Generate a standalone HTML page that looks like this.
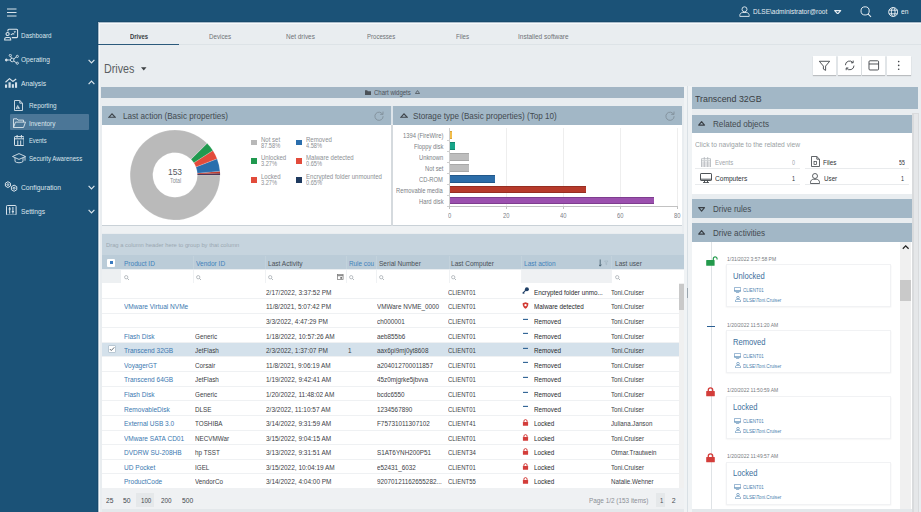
<!DOCTYPE html>
<html><head><meta charset="utf-8">
<style>
*{box-sizing:border-box;margin:0;padding:0}
html,body{width:921px;height:512px;overflow:hidden}
body{background:#1b5277;font-family:"Liberation Sans",sans-serif;position:relative;color:#333}
.a{position:absolute;white-space:nowrap}
</style></head>
<body>
<div class="a" style="left:97.00px;top:21.00px;width:824.00px;height:1.00px;background:#184a6c"></div>
<div class="a" style="left:97.00px;top:21.00px;width:1.00px;height:491.00px;background:#184a6c"></div>
<svg class="a" style="left:7.00px;top:8.00px" width="10" height="9" viewBox="0 0 10 9"><path d="M0 1h9.5M0 4.5h9.5M0 8h9.5" stroke="#dbe5ec" stroke-width="1" fill="none"/></svg>
<svg class="a" style="left:739.00px;top:6.00px" width="11" height="11" viewBox="0 0 11 11"><circle cx="5.5" cy="3.3" r="2.5" fill="none" stroke="#e6edf2" stroke-width="0.9"/><path d="M0.8 10.4v-1c0-1.6 1.3-2.9 2.9-2.9h3.6c1.6 0 2.9 1.3 2.9 2.9v1z" fill="none" stroke="#e6edf2" stroke-width="0.9"/></svg>
<div class="a" style="left:752.90px;top:7px;font-size:7px;line-height:10px;color:#e6edf2;transform:scaleX(0.929);transform-origin:0 0">DLSE\administrator@root</div>
<svg class="a" style="left:834.20px;top:9.60px" width="7.4" height="4.6" viewBox="0 0 7.4 4.6"><path d="M0.7 0.7h6L3.7 3.9z" fill="none" stroke="#e6edf2" stroke-width="1.2" stroke-linejoin="round"/></svg>
<svg class="a" style="left:860.00px;top:5.50px" width="12" height="12" viewBox="0 0 12 12"><circle cx="5.1" cy="4.9" r="4.1" fill="none" stroke="#e6edf2" stroke-width="1"/><path d="M8 7.9l3 3" stroke="#e6edf2" stroke-width="1.1"/></svg>
<svg class="a" style="left:887.60px;top:7.00px" width="10.4" height="10" viewBox="0 0 10.4 10"><g fill="none" stroke="#e6edf2" stroke-width="0.95"><circle cx="5.2" cy="5" r="4.5"/><ellipse cx="5.2" cy="5" rx="1.9" ry="4.5"/><path d="M0.9 3.2h8.6M0.9 6.8h8.6"/></g></svg>
<div class="a" style="left:900.50px;top:7px;font-size:7px;line-height:10px;color:#e6edf2;transform:scaleX(0.963);transform-origin:0 0">en</div>
<svg class="a" style="left:4.00px;top:28.00px" width="15" height="13" viewBox="0 0 15 13"><g fill="none" stroke="#dbe5ec" stroke-width="1.05"><path d="M3.9 3.4V2.3a1 1 0 0 1 1-1H12.6a1 1 0 0 1 1 1V8.6a1 1 0 0 1-1 1H7.8"/><circle cx="3.6" cy="6" r="1.55"/><path d="M0.7 11.9v-0.7a1.8 1.8 0 0 1 1.8-1.8h2.4a1.8 1.8 0 0 1 1.8 1.8v0.7z"/><path d="M6.8 6.9L9 5.6l1.3 0.6"/></g><path d="M9.6 3.4l2.2-0.3-0.8 2.2z" fill="#dbe5ec"/></svg>
<div class="a" style="left:20.70px;top:31px;font-size:7px;line-height:10px;color:#dbe5ec;transform:scaleX(0.891);transform-origin:0 0">Dashboard</div>
<svg class="a" style="left:4.50px;top:53.50px" width="14" height="11" viewBox="0 0 14 11"><g fill="none" stroke="#dbe5ec" stroke-width="0.9"><circle cx="1.3" cy="6" r="1" fill="#dbe5ec"/><circle cx="7.2" cy="6" r="1.8"/><circle cx="5.3" cy="1.4" r="1.1"/><circle cx="12.3" cy="2.4" r="1.1"/><circle cx="12.3" cy="9.2" r="1.1"/><path d="M2.3 6H5.4M6.5 4.3L5.8 2.4M8.7 5l2.6-2M8.7 7.1l2.6 1.6"/></g></svg>
<div class="a" style="left:21.10px;top:55px;font-size:7px;line-height:10px;color:#dbe5ec;transform:scaleX(0.940);transform-origin:0 0">Operating</div>
<svg class="a" style="left:88.00px;top:58.50px" width="7" height="5" viewBox="0 0 7 5"><g fill="none" stroke="#dbe5ec" stroke-width="1.2"><path d="M0.6 0.8L3.5 3.8L6.4 0.8"/></g></svg>
<svg class="a" style="left:3.00px;top:76.00px" width="16" height="13" viewBox="0 0 16 13"><g fill="#d3e0ea"><rect x="2" y="8.5" width="2.1" height="3.3"/><rect x="5.5" y="6.3" width="2.2" height="5.5"/><rect x="8.8" y="8.2" width="2.1" height="3.6"/><rect x="12" y="6.3" width="2.1" height="5.5"/></g><path d="M2.5 6.2L6.5 2.6L9.8 5.4L13.2 3" fill="none" stroke="#dbe5ec" stroke-width="1.2" stroke-linejoin="round"/></svg>
<div class="a" style="left:21.00px;top:79px;font-size:7px;line-height:10px;color:#dbe5ec;transform:scaleX(0.959);transform-origin:0 0">Analysis</div>
<svg class="a" style="left:88.00px;top:79.50px" width="7" height="5" viewBox="0 0 7 5"><g fill="none" stroke="#dbe5ec" stroke-width="1.2"><path d="M0.6 4.2L3.5 1.2L6.4 4.2"/></g></svg>
<svg class="a" style="left:14.00px;top:99.50px" width="9" height="11" viewBox="0 0 9 11"><g fill="none" stroke="#dbe5ec" stroke-width="0.9"><path d="M0.5 0.5h5.3l2.7 2.7v7.3H0.5z"/><path d="M5.8 0.5v2.7h2.7M2.2 9l1.5-3.5 1.5 3.5M2.7 8h3"/></g></svg>
<div class="a" style="left:29.00px;top:101px;font-size:7px;line-height:10px;color:#dbe5ec;transform:scaleX(0.909);transform-origin:0 0">Reporting</div>
<div class="a" style="left:9.70px;top:114.40px;width:79.10px;height:16.10px;background:#4b7697;border-radius:1px"></div>
<svg class="a" style="left:12.70px;top:118.00px" width="13" height="10" viewBox="0 0 13 10"><g fill="none" stroke="#dbe5ec" stroke-width="0.9"><path d="M0.5 9.5V0.8h3.5l1 1.3h5.5v2"/><path d="M0.5 9.5l2-5.4h10l-2 5.4z"/></g></svg>
<div class="a" style="left:29.00px;top:119px;font-size:7px;line-height:10px;color:#dbe5ec;transform:scaleX(0.917);transform-origin:0 0">Inventory</div>
<svg class="a" style="left:13.70px;top:135.00px" width="10.5" height="11" viewBox="0 0 10.5 11"><g fill="none" stroke="#dbe5ec" stroke-width="1"><rect x="0.5" y="1.6" width="9.5" height="8.9" rx="0.6"/><path d="M0.5 3.8h9.5M3.1 0v2.8M7.4 0v2.8M3.8 5.5v5M6.7 5.5v5"/></g></svg>
<div class="a" style="left:29.00px;top:136px;font-size:7px;line-height:10px;color:#dbe5ec;transform:scaleX(0.822);transform-origin:0 0">Events</div>
<svg class="a" style="left:12.00px;top:153.00px" width="14" height="11" viewBox="0 0 14 11"><g fill="none" stroke="#dbe5ec" stroke-width="0.9"><path d="M0.5 3.5L7 0.6l6.5 2.9L7 6.4z"/><path d="M3 4.7v3.8c1.5 1.7 6.5 1.7 8 0V4.7M13 3.7v4"/></g></svg>
<div class="a" style="left:29.00px;top:154px;font-size:7px;line-height:10px;color:#dbe5ec;transform:scaleX(0.867);transform-origin:0 0">Security Awareness</div>
<svg class="a" style="left:3.00px;top:180.00px" width="16" height="13" viewBox="0 0 16 13"><g fill="none" stroke="#dbe5ec" stroke-width="1"><path d="M7.41 6.05L4.90 7.50L2.39 6.05L2.39 3.15L4.90 1.70L7.41 3.15z"/><circle cx="4.9" cy="4.6" r="0.9"/><path d="M13.78 9.75L11.10 11.30L8.42 9.75L8.42 6.65L11.10 5.10L13.78 6.65z"/><circle cx="11.1" cy="8.2" r="1"/></g></svg>
<div class="a" style="left:21.10px;top:183px;font-size:7px;line-height:10px;color:#dbe5ec;transform:scaleX(0.963);transform-origin:0 0">Configuration</div>
<svg class="a" style="left:88.00px;top:185.00px" width="7" height="5" viewBox="0 0 7 5"><g fill="none" stroke="#dbe5ec" stroke-width="1.2"><path d="M0.6 0.8L3.5 3.8L6.4 0.8"/></g></svg>
<svg class="a" style="left:6.00px;top:204.60px" width="10.6" height="10.6" viewBox="0 0 10.6 10.6"><g fill="none" stroke="#dbe5ec" stroke-width="1"><rect x="0.5" y="0.5" width="9.6" height="9.6" rx="0.8"/><path d="M3.7 2v6.6M6.9 2v6.6M2.6 4h2.2M5.8 6.6h2.2"/></g></svg>
<div class="a" style="left:21.10px;top:207px;font-size:7px;line-height:10px;color:#dbe5ec;transform:scaleX(0.949);transform-origin:0 0">Settings</div>
<svg class="a" style="left:88.00px;top:209.00px" width="7" height="5" viewBox="0 0 7 5"><g fill="none" stroke="#dbe5ec" stroke-width="1.2"><path d="M0.6 0.8L3.5 3.8L6.4 0.8"/></g></svg>
<div class="a" style="left:98.00px;top:22.00px;width:823.00px;height:490.00px;background:#e9edf0"></div>
<div class="a" style="left:98.00px;top:22.00px;width:823.00px;height:1.00px;background:#a9bccb"></div>
<div class="a" style="left:98.00px;top:23.00px;width:823.00px;height:1.00px;background:#f7f9fa"></div>
<div class="a" style="left:98.00px;top:22.00px;width:1.00px;height:490.00px;background:#a9bccb"></div>
<div class="a" style="left:99.00px;top:23.00px;width:1.00px;height:489.00px;background:#f7f9fa"></div>
<div class="a" style="left:98.00px;top:44.00px;width:823.00px;height:1.00px;background:#dde3e7"></div>
<div class="a" style="left:98.00px;top:44.00px;width:81.00px;height:1.30px;background:#2b5a7c"></div>
<div class="a" style="left:129.80px;top:32px;font-size:7px;line-height:10px;color:#3a3e42;font-weight:bold;transform:scaleX(0.841);transform-origin:0 0">Drives</div>
<div class="a" style="left:208.60px;top:32px;font-size:7px;line-height:10px;color:#6e7276;transform:scaleX(0.888);transform-origin:0 0">Devices</div>
<div class="a" style="left:286.10px;top:32px;font-size:7px;line-height:10px;color:#6e7276;transform:scaleX(0.917);transform-origin:0 0">Net drives</div>
<div class="a" style="left:367.20px;top:32px;font-size:7px;line-height:10px;color:#6e7276;transform:scaleX(0.863);transform-origin:0 0">Processes</div>
<div class="a" style="left:455.60px;top:32px;font-size:7px;line-height:10px;color:#6e7276;transform:scaleX(0.886);transform-origin:0 0">Files</div>
<div class="a" style="left:517.70px;top:32px;font-size:7px;line-height:10px;color:#6e7276;transform:scaleX(0.929);transform-origin:0 0">Installed software</div>
<div class="a" style="left:103.80px;top:61px;font-size:12.5px;line-height:16px;color:#5a5e62;transform:scaleX(0.858);transform-origin:0 0">Drives</div>
<svg class="a" style="left:141.30px;top:67.00px" width="5.5" height="4" viewBox="0 0 5.5 4"><path d="M0 0.3h5.5L2.75 3.5z" fill="#3d4144"/></svg>
<div class="a" style="left:812.7px;top:56.2px;width:23.4px;height:18.7px;background:#fff;box-shadow:0 1px 1px rgba(0,0,0,0.2)"></div>
<svg class="a" style="left:812.70px;top:56.20px" width="23.4" height="18.7" viewBox="0 0 23.4 18.7"><path d="M6.3 5.3h10.4l-4.1 4.8v4.3l-2.2-1.3v-3z" fill="none" stroke="#3f4347" stroke-width="0.9"/></svg>
<div class="a" style="left:837.7px;top:56.2px;width:23.4px;height:18.7px;background:#fff;box-shadow:0 1px 1px rgba(0,0,0,0.2)"></div>
<svg class="a" style="left:837.70px;top:56.20px" width="23.4" height="18.7" viewBox="0 0 23.4 18.7"><g fill="none" stroke="#3f4347" stroke-width="0.9"><path d="M7.4 9.2a4.2 4.2 0 0 1 7.5-2.6M16 9.6a4.2 4.2 0 0 1-7.5 2.6"/><path d="M15.2 4.6v2.2H13M8.2 14.2V12h2.2"/></g></svg>
<div class="a" style="left:862px;top:56.2px;width:23.4px;height:18.7px;background:#fff;box-shadow:0 1px 1px rgba(0,0,0,0.2)"></div>
<svg class="a" style="left:862.00px;top:56.20px" width="23.4" height="18.7" viewBox="0 0 23.4 18.7"><rect x="7" y="4.8" width="9.6" height="9.2" rx="1" fill="none" stroke="#3f4347" stroke-width="0.9"/><path d="M7 8h9.6" stroke="#3f4347" stroke-width="0.9"/></svg>
<div class="a" style="left:887.4px;top:56.2px;width:23.4px;height:18.7px;background:#fff;box-shadow:0 1px 1px rgba(0,0,0,0.2)"></div>
<svg class="a" style="left:887.40px;top:56.20px" width="23.4" height="18.7" viewBox="0 0 23.4 18.7"><circle cx="11.7" cy="5.6" r="0.8" fill="#3f4347"/><circle cx="11.7" cy="9.4" r="0.8" fill="#3f4347"/><circle cx="11.7" cy="13.2" r="0.8" fill="#3f4347"/></svg>
<div class="a" style="left:101.20px;top:87.00px;width:582.80px;height:11.20px;background:#a2b5c4"></div>
<svg class="a" style="left:364.50px;top:90.00px" width="6" height="5" viewBox="0 0 6 5"><path d="M0 0.3h2.2l0.6 0.9H6V5H0z" fill="#4b5258"/></svg>
<div class="a" style="left:374.00px;top:89px;font-size:6.5px;line-height:8px;color:#4b5258;transform:scaleX(0.926);transform-origin:0 0">Chart widgets</div>
<svg class="a" style="left:415.30px;top:90.30px" width="5" height="4" viewBox="0 0 5 4"><path d="M0.4 3.5L2.5 0.6L4.6 3.5z" fill="none" stroke="#4b5258" stroke-width="0.8"/></svg>
<div class="a" style="left:101.80px;top:106.30px;width:289.40px;height:119.20px;background:#fff"></div>
<div class="a" style="left:101.80px;top:225.00px;width:289.40px;height:1.20px;background:#c9d1d7"></div>
<div class="a" style="left:101.80px;top:106.30px;width:289.40px;height:18.70px;background:#a2b7c6"></div>
<svg class="a" style="left:108.20px;top:112.60px" width="8" height="5" viewBox="0 0 8 5"><path d="M0.8 4.3L4 0.8L7.2 4.3z" fill="none" stroke="#3f464c" stroke-width="1.1"/></svg>
<div class="a" style="left:122.50px;top:110px;font-size:9.5px;line-height:12px;color:#434a50;transform:scaleX(0.853);transform-origin:0 0">Last action (Basic properties)</div>
<svg class="a" style="left:373.60px;top:111.00px" width="10" height="10" viewBox="0 0 10 10"><path d="M8.6 3.3A4.1 4.1 0 1 0 9.1 5.2" fill="none" stroke="#7e8c96" stroke-width="0.8"/><path d="M9 0.6v2.8H6.2" fill="none" stroke="#7e8c96" stroke-width="0.8"/></svg>
<svg class="a" style="left:125px;top:125px" width="100" height="100" viewBox="125 125 100 100"><path d="M220.10 175.00A45 45 0 0 0 220.06 173.16L197.38 174.09A22.3 22.3 0 0 1 197.40 175.00z" fill="#3a2448"/><path d="M220.06 173.16A45 45 0 0 0 219.95 171.33L197.33 173.18A22.3 22.3 0 0 1 197.38 174.09z" fill="#c0392b"/><path d="M219.95 171.33A45 45 0 0 0 217.06 158.75L195.90 166.95A22.3 22.3 0 0 1 197.33 173.18z" fill="#2a6ead" stroke="#fff" stroke-width="0.3" stroke-opacity="0.6"/><path d="M217.06 158.75A45 45 0 0 0 212.87 150.53L193.82 162.87A22.3 22.3 0 0 1 195.90 166.95z" fill="#e24b3b" stroke="#fff" stroke-width="0.3" stroke-opacity="0.6"/><path d="M212.87 150.53A45 45 0 0 0 207.08 143.34L190.95 159.31A22.3 22.3 0 0 1 193.82 162.87z" fill="#20994f" stroke="#fff" stroke-width="0.3" stroke-opacity="0.6"/><path d="M207.08 143.34A45 45 0 1 0 220.10 175.01L197.40 175.00A22.3 22.3 0 1 1 190.95 159.31z" fill="#bababa" stroke="#fff" stroke-width="0.3" stroke-opacity="0.6"/></svg>
<div class="a" style="left:168.20px;top:166px;font-size:9px;line-height:12px;color:#55595e;transform:scaleX(0.926);transform-origin:0 0">153</div>
<div class="a" style="left:169.60px;top:177px;font-size:6.5px;line-height:8px;color:#8a8e92;transform:scaleX(0.816);transform-origin:0 0">Total</div>
<div class="a" style="left:251.00px;top:139.60px;width:6.20px;height:5.90px;background:#b8b8b8"></div>
<div class="a" style="left:261.00px;top:136px;font-size:6.5px;line-height:8px;color:#8c9094;transform:scaleX(0.930);transform-origin:0 0">Not set</div>
<div class="a" style="left:261.00px;top:142px;font-size:6.5px;line-height:8px;color:#8c9094;transform:scaleX(0.870);transform-origin:0 0">87.58%</div>
<div class="a" style="left:251.00px;top:158.40px;width:6.20px;height:5.90px;background:#20994f"></div>
<div class="a" style="left:261.00px;top:154px;font-size:6.5px;line-height:8px;color:#8c9094;transform:scaleX(0.930);transform-origin:0 0">Unlocked</div>
<div class="a" style="left:261.00px;top:160px;font-size:6.5px;line-height:8px;color:#8c9094;transform:scaleX(0.870);transform-origin:0 0">3.27%</div>
<div class="a" style="left:251.00px;top:177.10px;width:6.20px;height:5.90px;background:#e24b3b"></div>
<div class="a" style="left:261.00px;top:173px;font-size:6.5px;line-height:8px;color:#8c9094;transform:scaleX(0.930);transform-origin:0 0">Locked</div>
<div class="a" style="left:261.00px;top:179px;font-size:6.5px;line-height:8px;color:#8c9094;transform:scaleX(0.870);transform-origin:0 0">3.27%</div>
<div class="a" style="left:296.20px;top:139.60px;width:6.20px;height:5.90px;background:#2a6ead"></div>
<div class="a" style="left:306.20px;top:136px;font-size:6.5px;line-height:8px;color:#8c9094;transform:scaleX(0.930);transform-origin:0 0">Removed</div>
<div class="a" style="left:306.20px;top:142px;font-size:6.5px;line-height:8px;color:#8c9094;transform:scaleX(0.870);transform-origin:0 0">4.58%</div>
<div class="a" style="left:296.20px;top:158.40px;width:6.20px;height:5.90px;background:#e24b3b"></div>
<div class="a" style="left:306.20px;top:154px;font-size:6.5px;line-height:8px;color:#8c9094;transform:scaleX(0.930);transform-origin:0 0">Malware detected</div>
<div class="a" style="left:306.20px;top:160px;font-size:6.5px;line-height:8px;color:#8c9094;transform:scaleX(0.870);transform-origin:0 0">0.65%</div>
<div class="a" style="left:296.20px;top:177.10px;width:6.20px;height:5.90px;background:#1f3a5f"></div>
<div class="a" style="left:306.20px;top:173px;font-size:6.5px;line-height:8px;color:#8c9094;transform:scaleX(0.930);transform-origin:0 0">Encrypted folder unmounted</div>
<div class="a" style="left:306.20px;top:179px;font-size:6.5px;line-height:8px;color:#8c9094;transform:scaleX(0.870);transform-origin:0 0">0.65%</div>
<div class="a" style="left:392.80px;top:106.30px;width:289.40px;height:119.20px;background:#fff"></div>
<div class="a" style="left:392.80px;top:225.00px;width:289.40px;height:1.20px;background:#c9d1d7"></div>
<div class="a" style="left:392.80px;top:106.30px;width:289.40px;height:18.70px;background:#a2b7c6"></div>
<svg class="a" style="left:399.70px;top:112.60px" width="8" height="5" viewBox="0 0 8 5"><path d="M0.8 4.3L4 0.8L7.2 4.3z" fill="none" stroke="#3f464c" stroke-width="1.1"/></svg>
<div class="a" style="left:413.40px;top:110px;font-size:9.5px;line-height:12px;color:#434a50;transform:scaleX(0.853);transform-origin:0 0">Storage type (Basic properties) (Top 10)</div>
<svg class="a" style="left:665.00px;top:111.00px" width="10" height="10" viewBox="0 0 10 10"><path d="M8.6 3.3A4.1 4.1 0 1 0 9.1 5.2" fill="none" stroke="#7e8c96" stroke-width="0.8"/><path d="M9 0.6v2.8H6.2" fill="none" stroke="#7e8c96" stroke-width="0.8"/></svg>
<div class="a" style="left:506.20px;top:128.00px;width:0.70px;height:78.00px;background:#eeeeee"></div>
<div class="a" style="left:563.20px;top:128.00px;width:0.70px;height:78.00px;background:#eeeeee"></div>
<div class="a" style="left:620.20px;top:128.00px;width:0.70px;height:78.00px;background:#eeeeee"></div>
<div class="a" style="left:677.20px;top:128.00px;width:0.70px;height:78.00px;background:#eeeeee"></div>
<div class="a" style="left:449.20px;top:131.40px;width:2.85px;height:7.20px;background:#f2bd4a;border-top:0.6px solid #d9a43a;border-bottom:0.6px solid #d9a43a"></div>
<div class="a" style="left:402.74px;top:131px;font-size:7px;line-height:10px;color:#7b8085;transform:scaleX(0.830);transform-origin:0 0">1394 (FireWire)</div>
<div class="a" style="left:447.00px;top:140.40px;width:2.20px;height:0.70px;background:#cfcfcf"></div>
<div class="a" style="left:449.20px;top:142.38px;width:5.70px;height:7.20px;background:#17a589;border-top:0.6px solid #11876f;border-bottom:0.6px solid #11876f"></div>
<div class="a" style="left:413.72px;top:142px;font-size:7px;line-height:10px;color:#7b8085;transform:scaleX(0.830);transform-origin:0 0">Floppy disk</div>
<div class="a" style="left:447.00px;top:151.38px;width:2.20px;height:0.70px;background:#cfcfcf"></div>
<div class="a" style="left:449.20px;top:153.36px;width:19.95px;height:7.20px;background:#bdbdbd;border-top:0.6px solid #a8a8a8;border-bottom:0.6px solid #a8a8a8"></div>
<div class="a" style="left:418.88px;top:153px;font-size:7px;line-height:10px;color:#7b8085;transform:scaleX(0.830);transform-origin:0 0">Unknown</div>
<div class="a" style="left:447.00px;top:162.36px;width:2.20px;height:0.70px;background:#cfcfcf"></div>
<div class="a" style="left:449.20px;top:164.34px;width:19.95px;height:7.20px;background:#bdbdbd;border-top:0.6px solid #a8a8a8;border-bottom:0.6px solid #a8a8a8"></div>
<div class="a" style="left:424.69px;top:164px;font-size:7px;line-height:10px;color:#7b8085;transform:scaleX(0.830);transform-origin:0 0">Not set</div>
<div class="a" style="left:447.00px;top:173.34px;width:2.20px;height:0.70px;background:#cfcfcf"></div>
<div class="a" style="left:449.20px;top:175.32px;width:45.60px;height:7.20px;background:#2c6da8;border-top:0.6px solid #22588a;border-bottom:0.6px solid #22588a"></div>
<div class="a" style="left:419.22px;top:175px;font-size:7px;line-height:10px;color:#7b8085;transform:scaleX(0.830);transform-origin:0 0">CD-ROM</div>
<div class="a" style="left:447.00px;top:184.32px;width:2.20px;height:0.70px;background:#cfcfcf"></div>
<div class="a" style="left:449.20px;top:186.30px;width:136.80px;height:7.20px;background:#b73a2b;border-top:0.6px solid #962e22;border-bottom:0.6px solid #962e22"></div>
<div class="a" style="left:396.27px;top:186px;font-size:7px;line-height:10px;color:#7b8085;transform:scaleX(0.830);transform-origin:0 0">Removable media</div>
<div class="a" style="left:447.00px;top:195.30px;width:2.20px;height:0.70px;background:#cfcfcf"></div>
<div class="a" style="left:449.20px;top:197.28px;width:205.20px;height:7.20px;background:#9b50ae;border-top:0.6px solid #7e3d8f;border-bottom:0.6px solid #7e3d8f"></div>
<div class="a" style="left:418.56px;top:197px;font-size:7px;line-height:10px;color:#7b8085;transform:scaleX(0.830);transform-origin:0 0">Hard disk</div>
<div class="a" style="left:447.00px;top:206.28px;width:2.20px;height:0.70px;background:#cfcfcf"></div>
<div class="a" style="left:449.20px;top:128.00px;width:0.70px;height:78.00px;background:#d0d0d0"></div>
<div class="a" style="left:449.20px;top:206.00px;width:228.70px;height:0.90px;background:#c2c2c2"></div>
<div class="a" style="left:449.20px;top:206.00px;width:0.80px;height:3.00px;background:#c2c2c2"></div>
<div class="a" style="left:447.98px;top:211px;font-size:7px;line-height:10px;color:#7b8085;transform:scaleX(0.830);transform-origin:0 0">0</div>
<div class="a" style="left:506.20px;top:206.00px;width:0.80px;height:3.00px;background:#c2c2c2"></div>
<div class="a" style="left:503.37px;top:211px;font-size:7px;line-height:10px;color:#7b8085;transform:scaleX(0.830);transform-origin:0 0">20</div>
<div class="a" style="left:563.20px;top:206.00px;width:0.80px;height:3.00px;background:#c2c2c2"></div>
<div class="a" style="left:560.37px;top:211px;font-size:7px;line-height:10px;color:#7b8085;transform:scaleX(0.830);transform-origin:0 0">40</div>
<div class="a" style="left:620.20px;top:206.00px;width:0.80px;height:3.00px;background:#c2c2c2"></div>
<div class="a" style="left:617.37px;top:211px;font-size:7px;line-height:10px;color:#7b8085;transform:scaleX(0.830);transform-origin:0 0">60</div>
<div class="a" style="left:677.20px;top:206.00px;width:0.80px;height:3.00px;background:#c2c2c2"></div>
<div class="a" style="left:674.37px;top:211px;font-size:7px;line-height:10px;color:#7b8085;transform:scaleX(0.830);transform-origin:0 0">80</div>
<div class="a" style="left:391.20px;top:106.30px;width:1.60px;height:18.20px;background:#dce4ea"></div>
<div class="a" style="left:391.20px;top:124.50px;width:1.60px;height:101.70px;background:#d5dade"></div>
<div class="a" style="left:101.80px;top:226.20px;width:580.40px;height:7.30px;background:#eef1f3"></div>
<div class="a" style="left:101.80px;top:233.50px;width:582.20px;height:21.90px;background:#c6d4de"></div>
<div class="a" style="left:105.80px;top:241px;font-size:6.2px;line-height:8px;color:#9ba8b2;transform:scaleX(0.940);transform-origin:0 0">Drag a column header here to group by that column</div>
<div class="a" style="left:101.80px;top:255.40px;width:582.20px;height:14.10px;background:#bbccd8"></div>
<div class="a" style="left:101.80px;top:269.50px;width:582.20px;height:13.80px;background:#fff"></div>
<div class="a" style="left:101.80px;top:269.50px;width:19.20px;height:13.80px;background:#edf0f2"></div>
<div class="a" style="left:521.00px;top:269.50px;width:90.00px;height:13.80px;background:#eff1f3"></div>
<div class="a" style="left:107.30px;top:258.90px;width:7.90px;height:7.90px;background:#fff;border-radius:1px"></div>
<div class="a" style="left:109.70px;top:261.30px;width:3.10px;height:3.10px;background:#3a7bc0"></div>
<div class="a" style="left:124.00px;top:259px;font-size:7px;line-height:10px;color:#4182bb;transform:scaleX(0.935);transform-origin:0 0">Product ID</div>
<svg class="a" style="left:124.00px;top:274.80px" width="5.5" height="5.5" viewBox="0 0 5 5"><circle cx="2" cy="2" r="1.5" fill="none" stroke="#9aa1a7" stroke-width="0.6"/><path d="M3.1 3.1l1.5 1.5" stroke="#9aa1a7" stroke-width="0.7"/></svg>
<div class="a" style="left:196.30px;top:259px;font-size:7px;line-height:10px;color:#4182bb;transform:scaleX(0.935);transform-origin:0 0">Vendor ID</div>
<div class="a" style="left:193.00px;top:256.00px;width:0.70px;height:13.00px;background:#c3d2dc"></div>
<div class="a" style="left:193.00px;top:270.00px;width:0.70px;height:13.00px;background:#f0f2f4"></div>
<svg class="a" style="left:196.30px;top:274.80px" width="5.5" height="5.5" viewBox="0 0 5 5"><circle cx="2" cy="2" r="1.5" fill="none" stroke="#9aa1a7" stroke-width="0.6"/><path d="M3.1 3.1l1.5 1.5" stroke="#9aa1a7" stroke-width="0.7"/></svg>
<div class="a" style="left:268.20px;top:259px;font-size:7px;line-height:10px;color:#4a5057;transform:scaleX(0.935);transform-origin:0 0">Last Activity</div>
<div class="a" style="left:265.00px;top:256.00px;width:0.70px;height:13.00px;background:#c3d2dc"></div>
<div class="a" style="left:265.00px;top:270.00px;width:0.70px;height:13.00px;background:#f0f2f4"></div>
<svg class="a" style="left:268.20px;top:274.80px" width="5.5" height="5.5" viewBox="0 0 5 5"><circle cx="2" cy="2" r="1.5" fill="none" stroke="#9aa1a7" stroke-width="0.6"/><path d="M3.1 3.1l1.5 1.5" stroke="#9aa1a7" stroke-width="0.7"/></svg>
<div class="a" style="left:348.70px;top:259px;font-size:7px;line-height:10px;color:#4182bb;transform:scaleX(0.905);transform-origin:0 0">Rule cou</div>
<div class="a" style="left:346.00px;top:256.00px;width:0.70px;height:13.00px;background:#c3d2dc"></div>
<div class="a" style="left:346.00px;top:270.00px;width:0.70px;height:13.00px;background:#f0f2f4"></div>
<svg class="a" style="left:348.70px;top:274.80px" width="5.5" height="5.5" viewBox="0 0 5 5"><circle cx="2" cy="2" r="1.5" fill="none" stroke="#9aa1a7" stroke-width="0.6"/><path d="M3.1 3.1l1.5 1.5" stroke="#9aa1a7" stroke-width="0.7"/></svg>
<div class="a" style="left:379.10px;top:259px;font-size:7px;line-height:10px;color:#4a5057;transform:scaleX(0.935);transform-origin:0 0">Serial Number</div>
<div class="a" style="left:376.00px;top:256.00px;width:0.70px;height:13.00px;background:#c3d2dc"></div>
<div class="a" style="left:376.00px;top:270.00px;width:0.70px;height:13.00px;background:#f0f2f4"></div>
<svg class="a" style="left:379.10px;top:274.80px" width="5.5" height="5.5" viewBox="0 0 5 5"><circle cx="2" cy="2" r="1.5" fill="none" stroke="#9aa1a7" stroke-width="0.6"/><path d="M3.1 3.1l1.5 1.5" stroke="#9aa1a7" stroke-width="0.7"/></svg>
<div class="a" style="left:451.20px;top:259px;font-size:7px;line-height:10px;color:#4a5057;transform:scaleX(0.935);transform-origin:0 0">Last Computer</div>
<div class="a" style="left:449.00px;top:256.00px;width:0.70px;height:13.00px;background:#c3d2dc"></div>
<div class="a" style="left:449.00px;top:270.00px;width:0.70px;height:13.00px;background:#f0f2f4"></div>
<svg class="a" style="left:451.20px;top:274.80px" width="5.5" height="5.5" viewBox="0 0 5 5"><circle cx="2" cy="2" r="1.5" fill="none" stroke="#9aa1a7" stroke-width="0.6"/><path d="M3.1 3.1l1.5 1.5" stroke="#9aa1a7" stroke-width="0.7"/></svg>
<div class="a" style="left:523.50px;top:259px;font-size:7px;line-height:10px;color:#4182bb;transform:scaleX(0.935);transform-origin:0 0">Last action</div>
<div class="a" style="left:521.00px;top:256.00px;width:0.70px;height:13.00px;background:#c3d2dc"></div>
<div class="a" style="left:521.00px;top:270.00px;width:0.70px;height:13.00px;background:#f0f2f4"></div>
<div class="a" style="left:614.70px;top:259px;font-size:7px;line-height:10px;color:#4a5057;transform:scaleX(0.935);transform-origin:0 0">Last user</div>
<div class="a" style="left:611.00px;top:256.00px;width:0.70px;height:13.00px;background:#c3d2dc"></div>
<div class="a" style="left:611.00px;top:270.00px;width:0.70px;height:13.00px;background:#f0f2f4"></div>
<svg class="a" style="left:614.70px;top:274.80px" width="5.5" height="5.5" viewBox="0 0 5 5"><circle cx="2" cy="2" r="1.5" fill="none" stroke="#9aa1a7" stroke-width="0.6"/><path d="M3.1 3.1l1.5 1.5" stroke="#9aa1a7" stroke-width="0.7"/></svg>
<svg class="a" style="left:599.00px;top:258.50px" width="10" height="8" viewBox="0 0 10 8"><path d="M1.2 0.5v6.5M0 5.6l1.2 1.6 1.2-1.6" fill="none" stroke="#3d5566" stroke-width="0.8"/><path d="M5.5 2h3.5l-1.4 1.7v2.2l-0.7-0.4v-1.8z" fill="none" stroke="#9fb0bd" stroke-width="0.5"/></svg>
<svg class="a" style="left:337.00px;top:274.20px" width="6.5" height="6" viewBox="0 0 6.5 6"><rect x="0.4" y="0.5" width="5.7" height="5.1" fill="none" stroke="#777" stroke-width="0.7"/><path d="M0.4 1.7h5.7" stroke="#777" stroke-width="1"/><rect x="3.3" y="3" width="1.8" height="1.8" fill="#777"/></svg>
<div class="a" style="left:101.80px;top:283.30px;width:577.20px;height:14.82px;background:#fff"></div>
<div class="a" style="left:101.80px;top:297.92px;width:577.20px;height:14.82px;background:#fff"></div>
<div class="a" style="left:101.80px;top:312.54px;width:577.20px;height:14.82px;background:#fff"></div>
<div class="a" style="left:101.80px;top:327.16px;width:577.20px;height:14.82px;background:#fff"></div>
<div class="a" style="left:101.80px;top:341.78px;width:577.20px;height:14.82px;background:#d4e1eb"></div>
<div class="a" style="left:107.50px;top:345.08px;width:8.00px;height:8.00px;background:#fff;border-radius:1px;border:0.6px solid #b9c8d4"></div>
<svg class="a" style="left:108.50px;top:346.28px" width="6" height="6" viewBox="0 0 6 6"><path d="M0.8 3l1.5 1.5 3-3.2" fill="none" stroke="#3d4a56" stroke-width="0.8"/></svg>
<div class="a" style="left:101.80px;top:356.40px;width:577.20px;height:14.82px;background:#fff"></div>
<div class="a" style="left:101.80px;top:371.02px;width:577.20px;height:14.82px;background:#fff"></div>
<div class="a" style="left:101.80px;top:385.64px;width:577.20px;height:14.82px;background:#fff"></div>
<div class="a" style="left:101.80px;top:400.26px;width:577.20px;height:14.82px;background:#fff"></div>
<div class="a" style="left:101.80px;top:414.88px;width:577.20px;height:14.82px;background:#fff"></div>
<div class="a" style="left:101.80px;top:429.50px;width:577.20px;height:14.82px;background:#fff"></div>
<div class="a" style="left:101.80px;top:444.12px;width:577.20px;height:14.82px;background:#fff"></div>
<div class="a" style="left:101.80px;top:458.74px;width:577.20px;height:14.82px;background:#fff"></div>
<div class="a" style="left:101.80px;top:473.36px;width:577.20px;height:14.82px;background:#fff"></div>
<div class="a" style="left:101.80px;top:297.50px;width:577.20px;height:1.00px;background:#eff1f3"></div>
<div class="a" style="left:101.80px;top:312.50px;width:577.20px;height:1.00px;background:#eff1f3"></div>
<div class="a" style="left:101.80px;top:326.50px;width:577.20px;height:1.00px;background:#eff1f3"></div>
<div class="a" style="left:101.80px;top:341.50px;width:577.20px;height:1.00px;background:#eff1f3"></div>
<div class="a" style="left:101.80px;top:355.50px;width:577.20px;height:1.00px;background:#eff1f3"></div>
<div class="a" style="left:101.80px;top:370.50px;width:577.20px;height:1.00px;background:#eff1f3"></div>
<div class="a" style="left:101.80px;top:385.50px;width:577.20px;height:1.00px;background:#eff1f3"></div>
<div class="a" style="left:101.80px;top:399.50px;width:577.20px;height:1.00px;background:#eff1f3"></div>
<div class="a" style="left:101.80px;top:414.50px;width:577.20px;height:1.00px;background:#eff1f3"></div>
<div class="a" style="left:101.80px;top:429.50px;width:577.20px;height:1.00px;background:#eff1f3"></div>
<div class="a" style="left:101.80px;top:443.50px;width:577.20px;height:1.00px;background:#eff1f3"></div>
<div class="a" style="left:101.80px;top:458.50px;width:577.20px;height:1.00px;background:#eff1f3"></div>
<div class="a" style="left:101.80px;top:472.50px;width:577.20px;height:1.00px;background:#eff1f3"></div>
<div class="a" style="left:266.00px;top:288px;font-size:7px;line-height:10px;color:#3c4146;transform:scaleX(0.925);transform-origin:0 0">2/17/2022, 3:37:52 PM</div>
<div class="a" style="left:448.00px;top:288px;font-size:7px;line-height:10px;color:#3c4146;transform:scaleX(0.850);transform-origin:0 0">CLIENT01</div>
<div class="a" style="left:610.70px;top:288px;font-size:7px;line-height:10px;color:#3c4146;transform:scaleX(0.885);transform-origin:0 0">Toni.Cruiser</div>
<svg class="a" style="left:522.00px;top:287.30px" width="7" height="7" viewBox="0 0 7 7"><circle cx="4.9" cy="2.2" r="2" fill="#1f3f66"/><path d="M3.8 3.2L0.6 6.4M1.4 5.6l0.9 0.9" stroke="#1f3f66" stroke-width="1.2"/></svg>
<div class="a" style="left:533.70px;top:288px;font-size:7px;line-height:10px;color:#26292c;transform:scaleX(0.900);transform-origin:0 0">Encrypted folder unmo...</div>
<div class="a" style="left:124.00px;top:302px;font-size:7px;line-height:10px;color:#3b78b0;transform:scaleX(0.935);transform-origin:0 0">VMware Virtual NVMe</div>
<div class="a" style="left:266.00px;top:302px;font-size:7px;line-height:10px;color:#3c4146;transform:scaleX(0.925);transform-origin:0 0">11/8/2021, 5:07:42 PM</div>
<div class="a" style="left:377.00px;top:302px;font-size:7px;line-height:10px;color:#3c4146;transform:scaleX(0.905);transform-origin:0 0">VMWare NVME_0000</div>
<div class="a" style="left:448.00px;top:302px;font-size:7px;line-height:10px;color:#3c4146;transform:scaleX(0.850);transform-origin:0 0">CLIENT01</div>
<div class="a" style="left:610.70px;top:302px;font-size:7px;line-height:10px;color:#3c4146;transform:scaleX(0.885);transform-origin:0 0">Toni.Cruiser</div>
<svg class="a" style="left:522.00px;top:301.92px" width="7" height="7" viewBox="0 0 7 7"><path d="M3.5 0.2L6.4 1.2C6.4 4 5.2 5.9 3.5 6.8 1.8 5.9 0.6 4 0.6 1.2z" fill="#d23a33"/><circle cx="3.5" cy="3.1" r="1.2" fill="#fff"/></svg>
<div class="a" style="left:533.70px;top:302px;font-size:7px;line-height:10px;color:#26292c;transform:scaleX(0.900);transform-origin:0 0">Malware detected</div>
<div class="a" style="left:266.00px;top:317px;font-size:7px;line-height:10px;color:#3c4146;transform:scaleX(0.925);transform-origin:0 0">3/3/2022, 4:47:29 PM</div>
<div class="a" style="left:377.00px;top:317px;font-size:7px;line-height:10px;color:#3c4146;transform:scaleX(0.905);transform-origin:0 0">ch000001</div>
<div class="a" style="left:448.00px;top:317px;font-size:7px;line-height:10px;color:#3c4146;transform:scaleX(0.850);transform-origin:0 0">CLIENT01</div>
<div class="a" style="left:610.70px;top:317px;font-size:7px;line-height:10px;color:#3c4146;transform:scaleX(0.885);transform-origin:0 0">Toni.Cruiser</div>
<svg class="a" style="left:522.00px;top:316.54px" width="7" height="7" viewBox="0 0 7 7"><path d="M1 2.4h5" stroke="#2b5f92" stroke-width="1.1"/></svg>
<div class="a" style="left:533.70px;top:317px;font-size:7px;line-height:10px;color:#26292c;transform:scaleX(0.900);transform-origin:0 0">Removed</div>
<div class="a" style="left:124.00px;top:332px;font-size:7px;line-height:10px;color:#3b78b0;transform:scaleX(0.935);transform-origin:0 0">Flash Disk</div>
<div class="a" style="left:195.10px;top:332px;font-size:7px;line-height:10px;color:#3c4146;transform:scaleX(0.900);transform-origin:0 0">Generic</div>
<div class="a" style="left:266.00px;top:332px;font-size:7px;line-height:10px;color:#3c4146;transform:scaleX(0.925);transform-origin:0 0">1/18/2022, 10:57:26 AM</div>
<div class="a" style="left:377.00px;top:332px;font-size:7px;line-height:10px;color:#3c4146;transform:scaleX(0.905);transform-origin:0 0">aeb855b6</div>
<div class="a" style="left:448.00px;top:332px;font-size:7px;line-height:10px;color:#3c4146;transform:scaleX(0.850);transform-origin:0 0">CLIENT01</div>
<div class="a" style="left:610.70px;top:332px;font-size:7px;line-height:10px;color:#3c4146;transform:scaleX(0.885);transform-origin:0 0">Toni.Cruiser</div>
<svg class="a" style="left:522.00px;top:331.16px" width="7" height="7" viewBox="0 0 7 7"><path d="M1 2.4h5" stroke="#2b5f92" stroke-width="1.1"/></svg>
<div class="a" style="left:533.70px;top:332px;font-size:7px;line-height:10px;color:#26292c;transform:scaleX(0.900);transform-origin:0 0">Removed</div>
<div class="a" style="left:124.00px;top:346px;font-size:7px;line-height:10px;color:#3b78b0;transform:scaleX(0.935);transform-origin:0 0">Transcend 32GB</div>
<div class="a" style="left:195.10px;top:346px;font-size:7px;line-height:10px;color:#3c4146;transform:scaleX(0.900);transform-origin:0 0">JetFlash</div>
<div class="a" style="left:266.00px;top:346px;font-size:7px;line-height:10px;color:#3c4146;transform:scaleX(0.925);transform-origin:0 0">2/3/2022, 1:37:07 PM</div>
<div class="a" style="left:348.00px;top:346px;font-size:7px;line-height:10px;color:#3c4146;transform:scaleX(0.900);transform-origin:0 0">1</div>
<div class="a" style="left:377.00px;top:346px;font-size:7px;line-height:10px;color:#3c4146;transform:scaleX(0.905);transform-origin:0 0">aax6pi9mj0yt8608</div>
<div class="a" style="left:448.00px;top:346px;font-size:7px;line-height:10px;color:#3c4146;transform:scaleX(0.850);transform-origin:0 0">CLIENT01</div>
<div class="a" style="left:610.70px;top:346px;font-size:7px;line-height:10px;color:#3c4146;transform:scaleX(0.885);transform-origin:0 0">Toni.Cruiser</div>
<svg class="a" style="left:522.00px;top:345.78px" width="7" height="7" viewBox="0 0 7 7"><path d="M1 2.4h5" stroke="#2b5f92" stroke-width="1.1"/></svg>
<div class="a" style="left:533.70px;top:346px;font-size:7px;line-height:10px;color:#26292c;transform:scaleX(0.900);transform-origin:0 0">Removed</div>
<div class="a" style="left:124.00px;top:361px;font-size:7px;line-height:10px;color:#3b78b0;transform:scaleX(0.935);transform-origin:0 0">VoyagerGT</div>
<div class="a" style="left:195.10px;top:361px;font-size:7px;line-height:10px;color:#3c4146;transform:scaleX(0.900);transform-origin:0 0">Corsair</div>
<div class="a" style="left:266.00px;top:361px;font-size:7px;line-height:10px;color:#3c4146;transform:scaleX(0.925);transform-origin:0 0">11/8/2021, 9:06:19 AM</div>
<div class="a" style="left:377.00px;top:361px;font-size:7px;line-height:10px;color:#3c4146;transform:scaleX(0.905);transform-origin:0 0">a204012700011857</div>
<div class="a" style="left:448.00px;top:361px;font-size:7px;line-height:10px;color:#3c4146;transform:scaleX(0.850);transform-origin:0 0">CLIENT01</div>
<div class="a" style="left:610.70px;top:361px;font-size:7px;line-height:10px;color:#3c4146;transform:scaleX(0.885);transform-origin:0 0">Toni.Cruiser</div>
<svg class="a" style="left:522.00px;top:360.40px" width="7" height="7" viewBox="0 0 7 7"><path d="M1 2.4h5" stroke="#2b5f92" stroke-width="1.1"/></svg>
<div class="a" style="left:533.70px;top:361px;font-size:7px;line-height:10px;color:#26292c;transform:scaleX(0.900);transform-origin:0 0">Removed</div>
<div class="a" style="left:124.00px;top:375px;font-size:7px;line-height:10px;color:#3b78b0;transform:scaleX(0.935);transform-origin:0 0">Transcend 64GB</div>
<div class="a" style="left:195.10px;top:375px;font-size:7px;line-height:10px;color:#3c4146;transform:scaleX(0.900);transform-origin:0 0">JetFlash</div>
<div class="a" style="left:266.00px;top:375px;font-size:7px;line-height:10px;color:#3c4146;transform:scaleX(0.925);transform-origin:0 0">1/19/2022, 9:42:41 AM</div>
<div class="a" style="left:377.00px;top:375px;font-size:7px;line-height:10px;color:#3c4146;transform:scaleX(0.905);transform-origin:0 0">45z0mjgrke5jbvva</div>
<div class="a" style="left:448.00px;top:375px;font-size:7px;line-height:10px;color:#3c4146;transform:scaleX(0.850);transform-origin:0 0">CLIENT01</div>
<div class="a" style="left:610.70px;top:375px;font-size:7px;line-height:10px;color:#3c4146;transform:scaleX(0.885);transform-origin:0 0">Toni.Cruiser</div>
<svg class="a" style="left:522.00px;top:375.02px" width="7" height="7" viewBox="0 0 7 7"><path d="M1 2.4h5" stroke="#2b5f92" stroke-width="1.1"/></svg>
<div class="a" style="left:533.70px;top:375px;font-size:7px;line-height:10px;color:#26292c;transform:scaleX(0.900);transform-origin:0 0">Removed</div>
<div class="a" style="left:124.00px;top:390px;font-size:7px;line-height:10px;color:#3b78b0;transform:scaleX(0.935);transform-origin:0 0">Flash Disk</div>
<div class="a" style="left:195.10px;top:390px;font-size:7px;line-height:10px;color:#3c4146;transform:scaleX(0.900);transform-origin:0 0">Generic</div>
<div class="a" style="left:266.00px;top:390px;font-size:7px;line-height:10px;color:#3c4146;transform:scaleX(0.925);transform-origin:0 0">1/20/2022, 11:48:02 AM</div>
<div class="a" style="left:377.00px;top:390px;font-size:7px;line-height:10px;color:#3c4146;transform:scaleX(0.905);transform-origin:0 0">bcdc6550</div>
<div class="a" style="left:448.00px;top:390px;font-size:7px;line-height:10px;color:#3c4146;transform:scaleX(0.850);transform-origin:0 0">CLIENT01</div>
<div class="a" style="left:610.70px;top:390px;font-size:7px;line-height:10px;color:#3c4146;transform:scaleX(0.885);transform-origin:0 0">Toni.Cruiser</div>
<svg class="a" style="left:522.00px;top:389.64px" width="7" height="7" viewBox="0 0 7 7"><path d="M1 2.4h5" stroke="#2b5f92" stroke-width="1.1"/></svg>
<div class="a" style="left:533.70px;top:390px;font-size:7px;line-height:10px;color:#26292c;transform:scaleX(0.900);transform-origin:0 0">Removed</div>
<div class="a" style="left:124.00px;top:405px;font-size:7px;line-height:10px;color:#3b78b0;transform:scaleX(0.935);transform-origin:0 0">RemovableDisk</div>
<div class="a" style="left:195.10px;top:405px;font-size:7px;line-height:10px;color:#3c4146;transform:scaleX(0.900);transform-origin:0 0">DLSE</div>
<div class="a" style="left:266.00px;top:405px;font-size:7px;line-height:10px;color:#3c4146;transform:scaleX(0.925);transform-origin:0 0">2/3/2022, 11:10:57 AM</div>
<div class="a" style="left:377.00px;top:405px;font-size:7px;line-height:10px;color:#3c4146;transform:scaleX(0.905);transform-origin:0 0">1234567890</div>
<div class="a" style="left:448.00px;top:405px;font-size:7px;line-height:10px;color:#3c4146;transform:scaleX(0.850);transform-origin:0 0">CLIENT01</div>
<div class="a" style="left:610.70px;top:405px;font-size:7px;line-height:10px;color:#3c4146;transform:scaleX(0.885);transform-origin:0 0">Toni.Cruiser</div>
<svg class="a" style="left:522.00px;top:404.26px" width="7" height="7" viewBox="0 0 7 7"><path d="M1 2.4h5" stroke="#2b5f92" stroke-width="1.1"/></svg>
<div class="a" style="left:533.70px;top:405px;font-size:7px;line-height:10px;color:#26292c;transform:scaleX(0.900);transform-origin:0 0">Removed</div>
<div class="a" style="left:124.00px;top:419px;font-size:7px;line-height:10px;color:#3b78b0;transform:scaleX(0.935);transform-origin:0 0">External USB 3.0</div>
<div class="a" style="left:195.10px;top:419px;font-size:7px;line-height:10px;color:#3c4146;transform:scaleX(0.900);transform-origin:0 0">TOSHIBA</div>
<div class="a" style="left:266.00px;top:419px;font-size:7px;line-height:10px;color:#3c4146;transform:scaleX(0.925);transform-origin:0 0">3/14/2022, 9:31:59 AM</div>
<div class="a" style="left:377.00px;top:419px;font-size:7px;line-height:10px;color:#3c4146;transform:scaleX(0.905);transform-origin:0 0">F75731011307102</div>
<div class="a" style="left:448.00px;top:419px;font-size:7px;line-height:10px;color:#3c4146;transform:scaleX(0.850);transform-origin:0 0">CLIENT41</div>
<div class="a" style="left:610.70px;top:419px;font-size:7px;line-height:10px;color:#3c4146;transform:scaleX(0.885);transform-origin:0 0">Juliana.Janson</div>
<svg class="a" style="left:522.00px;top:418.88px" width="7" height="7" viewBox="0 0 7 7"><path d="M1.9 3.2V2.2a1.6 1.6 0 0 1 3.2 0v1" fill="none" stroke="#d33d3a" stroke-width="1"/><rect x="0.9" y="3.1" width="5.2" height="3.7" rx="0.5" fill="#d33d3a"/></svg>
<div class="a" style="left:533.70px;top:419px;font-size:7px;line-height:10px;color:#26292c;transform:scaleX(0.900);transform-origin:0 0">Locked</div>
<div class="a" style="left:124.00px;top:434px;font-size:7px;line-height:10px;color:#3b78b0;transform:scaleX(0.935);transform-origin:0 0">VMware SATA CD01</div>
<div class="a" style="left:195.10px;top:434px;font-size:7px;line-height:10px;color:#3c4146;transform:scaleX(0.900);transform-origin:0 0">NECVMWar</div>
<div class="a" style="left:266.00px;top:434px;font-size:7px;line-height:10px;color:#3c4146;transform:scaleX(0.925);transform-origin:0 0">3/15/2022, 9:04:15 AM</div>
<div class="a" style="left:448.00px;top:434px;font-size:7px;line-height:10px;color:#3c4146;transform:scaleX(0.850);transform-origin:0 0">CLIENT01</div>
<div class="a" style="left:610.70px;top:434px;font-size:7px;line-height:10px;color:#3c4146;transform:scaleX(0.885);transform-origin:0 0">Toni.Cruiser</div>
<svg class="a" style="left:522.00px;top:433.50px" width="7" height="7" viewBox="0 0 7 7"><path d="M1.9 3.2V2.2a1.6 1.6 0 0 1 3.2 0v1" fill="none" stroke="#d33d3a" stroke-width="1"/><rect x="0.9" y="3.1" width="5.2" height="3.7" rx="0.5" fill="#d33d3a"/></svg>
<div class="a" style="left:533.70px;top:434px;font-size:7px;line-height:10px;color:#26292c;transform:scaleX(0.900);transform-origin:0 0">Locked</div>
<div class="a" style="left:124.00px;top:448px;font-size:7px;line-height:10px;color:#3b78b0;transform:scaleX(0.935);transform-origin:0 0">DVDRW SU-208HB</div>
<div class="a" style="left:195.10px;top:448px;font-size:7px;line-height:10px;color:#3c4146;transform:scaleX(0.900);transform-origin:0 0">hp TSST</div>
<div class="a" style="left:266.00px;top:448px;font-size:7px;line-height:10px;color:#3c4146;transform:scaleX(0.925);transform-origin:0 0">3/13/2022, 9:31:51 AM</div>
<div class="a" style="left:377.00px;top:448px;font-size:7px;line-height:10px;color:#3c4146;transform:scaleX(0.905);transform-origin:0 0">S1AT6YNH200P51</div>
<div class="a" style="left:448.00px;top:448px;font-size:7px;line-height:10px;color:#3c4146;transform:scaleX(0.850);transform-origin:0 0">CLIENT34</div>
<div class="a" style="left:610.70px;top:448px;font-size:7px;line-height:10px;color:#3c4146;transform:scaleX(0.885);transform-origin:0 0">Otmar.Trautwein</div>
<svg class="a" style="left:522.00px;top:448.12px" width="7" height="7" viewBox="0 0 7 7"><path d="M1.9 3.2V2.2a1.6 1.6 0 0 1 3.2 0v1" fill="none" stroke="#d33d3a" stroke-width="1"/><rect x="0.9" y="3.1" width="5.2" height="3.7" rx="0.5" fill="#d33d3a"/></svg>
<div class="a" style="left:533.70px;top:448px;font-size:7px;line-height:10px;color:#26292c;transform:scaleX(0.900);transform-origin:0 0">Locked</div>
<div class="a" style="left:124.00px;top:463px;font-size:7px;line-height:10px;color:#3b78b0;transform:scaleX(0.935);transform-origin:0 0">UD Pocket</div>
<div class="a" style="left:195.10px;top:463px;font-size:7px;line-height:10px;color:#3c4146;transform:scaleX(0.900);transform-origin:0 0">IGEL</div>
<div class="a" style="left:266.00px;top:463px;font-size:7px;line-height:10px;color:#3c4146;transform:scaleX(0.925);transform-origin:0 0">3/15/2022, 10:04:19 AM</div>
<div class="a" style="left:377.00px;top:463px;font-size:7px;line-height:10px;color:#3c4146;transform:scaleX(0.905);transform-origin:0 0">e52431_6032</div>
<div class="a" style="left:448.00px;top:463px;font-size:7px;line-height:10px;color:#3c4146;transform:scaleX(0.850);transform-origin:0 0">CLIENT01</div>
<div class="a" style="left:610.70px;top:463px;font-size:7px;line-height:10px;color:#3c4146;transform:scaleX(0.885);transform-origin:0 0">Toni.Cruiser</div>
<svg class="a" style="left:522.00px;top:462.74px" width="7" height="7" viewBox="0 0 7 7"><path d="M1.9 3.2V2.2a1.6 1.6 0 0 1 3.2 0v1" fill="none" stroke="#d33d3a" stroke-width="1"/><rect x="0.9" y="3.1" width="5.2" height="3.7" rx="0.5" fill="#d33d3a"/></svg>
<div class="a" style="left:533.70px;top:463px;font-size:7px;line-height:10px;color:#26292c;transform:scaleX(0.900);transform-origin:0 0">Locked</div>
<div class="a" style="left:124.00px;top:477px;font-size:7px;line-height:10px;color:#3b78b0;transform:scaleX(0.935);transform-origin:0 0">ProductCode</div>
<div class="a" style="left:195.10px;top:477px;font-size:7px;line-height:10px;color:#3c4146;transform:scaleX(0.900);transform-origin:0 0">VendorCo</div>
<div class="a" style="left:266.00px;top:477px;font-size:7px;line-height:10px;color:#3c4146;transform:scaleX(0.925);transform-origin:0 0">3/14/2022, 4:04:00 PM</div>
<div class="a" style="left:377.00px;top:477px;font-size:7px;line-height:10px;color:#3c4146;transform:scaleX(0.905);transform-origin:0 0">92070121162655282...</div>
<div class="a" style="left:448.00px;top:477px;font-size:7px;line-height:10px;color:#3c4146;transform:scaleX(0.850);transform-origin:0 0">CLIENT55</div>
<div class="a" style="left:610.70px;top:477px;font-size:7px;line-height:10px;color:#3c4146;transform:scaleX(0.885);transform-origin:0 0">Natalie.Wehner</div>
<svg class="a" style="left:522.00px;top:477.36px" width="7" height="7" viewBox="0 0 7 7"><path d="M1.9 3.2V2.2a1.6 1.6 0 0 1 3.2 0v1" fill="none" stroke="#d33d3a" stroke-width="1"/><rect x="0.9" y="3.1" width="5.2" height="3.7" rx="0.5" fill="#d33d3a"/></svg>
<div class="a" style="left:533.70px;top:477px;font-size:7px;line-height:10px;color:#26292c;transform:scaleX(0.900);transform-origin:0 0">Locked</div>
<div class="a" style="left:679.00px;top:283.30px;width:5.00px;height:204.90px;background:#f0f0f0"></div>
<div class="a" style="left:679.00px;top:283.80px;width:5.00px;height:26.00px;background:#c9c9c9"></div>
<div class="a" style="left:101.80px;top:488.00px;width:582.20px;height:21.00px;background:#eff1f3"></div>
<div class="a" style="left:101.80px;top:509.00px;width:582.20px;height:3.00px;background:#e4e8eb"></div>
<div class="a" style="left:135.80px;top:493.20px;width:18.50px;height:13.60px;background:#e5e8ea"></div>
<div class="a" style="left:656.20px;top:493.20px;width:9.10px;height:13.60px;background:#e5e8ea"></div>
<div class="a" style="left:105.60px;top:496px;font-size:7px;line-height:10px;color:#43484d;transform:scaleX(0.950);transform-origin:0 0">25</div>
<div class="a" style="left:122.80px;top:496px;font-size:7px;line-height:10px;color:#43484d;transform:scaleX(0.976);transform-origin:0 0">50</div>
<div class="a" style="left:140.70px;top:496px;font-size:7px;line-height:10px;color:#43484d;transform:scaleX(0.882);transform-origin:0 0">100</div>
<div class="a" style="left:161.30px;top:496px;font-size:7px;line-height:10px;color:#43484d;transform:scaleX(0.908);transform-origin:0 0">200</div>
<div class="a" style="left:182.00px;top:496px;font-size:7px;line-height:10px;color:#43484d;transform:scaleX(0.959);transform-origin:0 0">500</div>
<div class="a" style="left:589.10px;top:496px;font-size:7px;line-height:10px;color:#8b9096;transform:scaleX(0.913);transform-origin:0 0">Page 1/2 (153 items)</div>
<div class="a" style="left:659.50px;top:496px;font-size:7px;line-height:10px;color:#4a4f54;transform:scaleX(0.848);transform-origin:0 0">1</div>
<div class="a" style="left:671.80px;top:496px;font-size:7px;line-height:10px;color:#4a4f54">2</div>
<div class="a" style="left:684.20px;top:86.00px;width:7.40px;height:426.00px;background:#f0f3f5"></div>
<div class="a" style="left:687.30px;top:86.00px;width:0.80px;height:426.00px;background:#d9e0e5"></div>
<div class="a" style="left:686.80px;top:288.00px;width:1.20px;height:10.00px;background:#9aa6af"></div>
<div class="a" style="left:691.80px;top:87.30px;width:226.20px;height:21.50px;background:#a2b7c6"></div>
<div class="a" style="left:694.50px;top:93px;font-size:9.5px;line-height:12px;color:#393e43;transform:scaleX(0.931);transform-origin:0 0">Transcend 32GB</div>
<div class="a" style="left:912.30px;top:113.40px;width:6.60px;height:398.60px;background:#d9dbdd"></div>
<div class="a" style="left:913.60px;top:114.00px;width:4.00px;height:398.00px;background:#e5e7e9"></div>
<div class="a" style="left:692.30px;top:114.60px;width:219.80px;height:18.40px;background:#a2b7c6"></div>
<svg class="a" style="left:698.40px;top:121.30px" width="7.2" height="4.8" viewBox="0 0 7.2 4.8"><path d="M0.7 4.1L3.6 0.7L6.5 4.1z" fill="none" stroke="#3a4046" stroke-width="1.2" stroke-linejoin="round"/></svg>
<div class="a" style="left:712.70px;top:118px;font-size:9.5px;line-height:12px;color:#434a50;transform:scaleX(0.855);transform-origin:0 0">Related objects</div>
<div class="a" style="left:692.30px;top:133.00px;width:219.80px;height:61.00px;background:#fff"></div>
<div class="a" style="left:695.00px;top:140px;font-size:7px;line-height:10px;color:#9a9fa4;transform:scaleX(0.954);transform-origin:0 0">Click to navigate to the related view</div>
<div class="a" style="left:695.00px;top:167.60px;width:105.00px;height:0.90px;background:#e9ebed"></div>
<div class="a" style="left:805.00px;top:167.60px;width:103.50px;height:0.90px;background:#e9ebed"></div>
<div class="a" style="left:695.00px;top:184.40px;width:105.00px;height:0.90px;background:#e9ebed"></div>
<div class="a" style="left:805.00px;top:184.40px;width:103.50px;height:0.90px;background:#e9ebed"></div>
<svg class="a" style="left:700.70px;top:156.80px" width="10" height="10.5" viewBox="0 0 10 10.5"><path d="M0.5 1.7h9v8.3h-9zM0.5 3.8h9M3.3 0v2.8M6.7 0v2.8M0.5 6h9M0.5 8h9M3.3 3.8v6.2M6.7 3.8v6.2" fill="none" stroke="#a9aeb3" stroke-width="0.7"/></svg>
<div class="a" style="left:714.80px;top:158px;font-size:7px;line-height:10px;color:#a0a5aa;transform:scaleX(0.850);transform-origin:0 0">Events</div>
<div class="a" style="left:792.30px;top:158px;font-size:7px;line-height:10px;color:#a0a5aa;transform:scaleX(0.771);transform-origin:0 0">0</div>
<svg class="a" style="left:699.80px;top:173.10px" width="12" height="10" viewBox="0 0 12 10"><rect x="0.5" y="0.5" width="11" height="7" rx="0.6" fill="none" stroke="#3a3f44" stroke-width="0.9"/><path d="M0.5 6.2h11M4.5 7.5v2M7.5 7.5v2M3 9.6h6" fill="none" stroke="#3a3f44" stroke-width="0.9"/></svg>
<div class="a" style="left:714.80px;top:174px;font-size:7px;line-height:10px;color:#2e3338;transform:scaleX(0.943);transform-origin:0 0">Computers</div>
<div class="a" style="left:792.30px;top:174px;font-size:7px;line-height:10px;color:#2e3338;transform:scaleX(0.771);transform-origin:0 0">1</div>
<svg class="a" style="left:810.50px;top:156.00px" width="9" height="11" viewBox="0 0 9 11"><path d="M0.5 0.5h5.3l2.7 2.7v7.3H0.5z" fill="none" stroke="#3a3f44" stroke-width="0.8"/><path d="M5.8 0.5v2.7h2.7" fill="none" stroke="#3a3f44" stroke-width="0.8"/><rect x="3" y="5.5" width="2.5" height="3" fill="none" stroke="#3a3f44" stroke-width="0.7"/></svg>
<div class="a" style="left:823.40px;top:158px;font-size:7px;line-height:10px;color:#2e3338;transform:scaleX(0.913);transform-origin:0 0">Files</div>
<div class="a" style="left:898.50px;top:158px;font-size:7px;line-height:10px;color:#2e3338;transform:scaleX(0.745);transform-origin:0 0">55</div>
<svg class="a" style="left:810.30px;top:173.00px" width="10" height="11" viewBox="0 0 10 11"><circle cx="5" cy="3" r="2.5" fill="none" stroke="#3a3f44" stroke-width="0.8"/><path d="M0.5 10.5V9.3c0-1.7 1.3-3 3-3h3c1.7 0 3 1.3 3 3v1.2z" fill="none" stroke="#3a3f44" stroke-width="0.8"/></svg>
<div class="a" style="left:823.50px;top:174px;font-size:7px;line-height:10px;color:#2e3338;transform:scaleX(0.893);transform-origin:0 0">User</div>
<div class="a" style="left:900.60px;top:174px;font-size:7px;line-height:10px;color:#2e3338;transform:scaleX(0.771);transform-origin:0 0">1</div>
<div class="a" style="left:692.30px;top:199.40px;width:219.80px;height:18.70px;background:#a2b7c6"></div>
<svg class="a" style="left:698.40px;top:207.20px" width="7.2" height="4.8" viewBox="0 0 7.2 4.8"><path d="M0.7 0.7L3.6 4.1L6.5 0.7z" fill="none" stroke="#3a4046" stroke-width="1.2" stroke-linejoin="round"/></svg>
<div class="a" style="left:712.90px;top:203px;font-size:9.5px;line-height:12px;color:#434a50;transform:scaleX(0.844);transform-origin:0 0">Drive rules</div>
<div class="a" style="left:692.30px;top:223.40px;width:219.80px;height:18.40px;background:#a2b7c6"></div>
<svg class="a" style="left:698.40px;top:229.80px" width="7.2" height="4.8" viewBox="0 0 7.2 4.8"><path d="M0.7 4.1L3.6 0.7L6.5 4.1z" fill="none" stroke="#3a4046" stroke-width="1.2" stroke-linejoin="round"/></svg>
<div class="a" style="left:712.90px;top:227px;font-size:9.5px;line-height:12px;color:#434a50;transform:scaleX(0.851);transform-origin:0 0">Drive activities</div>
<div class="a" style="left:692.30px;top:241.80px;width:219.80px;height:267.50px;background:#fff"></div>
<div class="a" style="left:692.30px;top:509.30px;width:219.80px;height:2.70px;background:#e4e8eb"></div>
<div class="a" style="left:900.00px;top:241.80px;width:11.40px;height:267.50px;background:#f0f0f0"></div>
<svg class="a" style="left:902.30px;top:245.30px" width="7.4" height="4.4" viewBox="0 0 7.4 4.4"><path d="M0.8 3.7L3.7 0.9L6.6 3.7" fill="none" stroke="#222" stroke-width="1.3"/></svg>
<div class="a" style="left:900.00px;top:279.80px;width:11.40px;height:21.50px;background:#c9c9c9"></div>
<div class="a" style="left:711.00px;top:241.80px;width:0.90px;height:267.50px;background:#dfe3e6"></div>
<div class="a" style="left:726.3px;top:263.8px;width:165px;height:43.5px;background:#fff;border:1px solid #f1f2f4;box-shadow:0 0.5px 1.5px rgba(0,0,0,0.08)"></div>
<div class="a" style="left:726.60px;top:255px;font-size:5.8px;line-height:8px;color:#777b80;transform:scaleX(0.860);transform-origin:0 0">1/31/2022 3:57:58 PM</div>
<div class="a" style="left:732.70px;top:270px;font-size:9px;line-height:12px;color:#3e6f9c;transform:scaleX(0.845);transform-origin:0 0">Unlocked</div>
<svg class="a" style="left:733.80px;top:286.60px" width="7.2" height="6" viewBox="0 0 7.2 6"><rect x="0.4" y="0.4" width="6.4" height="4.1" rx="0.4" fill="none" stroke="#4a7fae" stroke-width="0.6"/><path d="M0.4 3.5h6.4M2 5.6h3.2" fill="none" stroke="#4a7fae" stroke-width="0.6"/></svg>
<div class="a" style="left:742.80px;top:286px;font-size:5.5px;line-height:8px;color:#4a7fae;transform:scaleX(0.802);transform-origin:0 0">CLIENT01</div>
<svg class="a" style="left:734.50px;top:296.20px" width="6" height="6" viewBox="0 0 6 6"><circle cx="3" cy="1.6" r="1.3" fill="none" stroke="#4a7fae" stroke-width="0.6"/><path d="M0.4 5.7V5c0-1 .7-1.7 1.7-1.7h1.8c1 0 1.7.7 1.7 1.7v.7z" fill="none" stroke="#4a7fae" stroke-width="0.6"/></svg>
<div class="a" style="left:742.80px;top:296px;font-size:5.5px;line-height:8px;color:#4a7fae;transform:scaleX(0.847);transform-origin:0 0">DLSE\Toni.Cruiser</div>
<svg class="a" style="left:705.60px;top:256.30px" width="12" height="10" viewBox="0 0 12 10"><path d="M7.3 4.3V2.7a1.9 1.9 0 0 1 3.8 0v0.7" fill="none" stroke="#239a4c" stroke-width="1.2"/><rect x="0.2" y="4" width="8.4" height="5.8" rx="0.6" fill="#239a4c"/></svg>
<div class="a" style="left:726.3px;top:329.8px;width:165px;height:43.5px;background:#fff;border:1px solid #f1f2f4;box-shadow:0 0.5px 1.5px rgba(0,0,0,0.08)"></div>
<div class="a" style="left:726.60px;top:321px;font-size:5.8px;line-height:8px;color:#777b80;transform:scaleX(0.860);transform-origin:0 0">1/20/2022 11:51:20 AM</div>
<div class="a" style="left:732.70px;top:336px;font-size:9px;line-height:12px;color:#3e6f9c;transform:scaleX(0.845);transform-origin:0 0">Removed</div>
<svg class="a" style="left:733.80px;top:352.60px" width="7.2" height="6" viewBox="0 0 7.2 6"><rect x="0.4" y="0.4" width="6.4" height="4.1" rx="0.4" fill="none" stroke="#4a7fae" stroke-width="0.6"/><path d="M0.4 3.5h6.4M2 5.6h3.2" fill="none" stroke="#4a7fae" stroke-width="0.6"/></svg>
<div class="a" style="left:742.80px;top:352px;font-size:5.5px;line-height:8px;color:#4a7fae;transform:scaleX(0.802);transform-origin:0 0">CLIENT01</div>
<svg class="a" style="left:734.50px;top:362.20px" width="6" height="6" viewBox="0 0 6 6"><circle cx="3" cy="1.6" r="1.3" fill="none" stroke="#4a7fae" stroke-width="0.6"/><path d="M0.4 5.7V5c0-1 .7-1.7 1.7-1.7h1.8c1 0 1.7.7 1.7 1.7v.7z" fill="none" stroke="#4a7fae" stroke-width="0.6"/></svg>
<div class="a" style="left:742.80px;top:362px;font-size:5.5px;line-height:8px;color:#4a7fae;transform:scaleX(0.847);transform-origin:0 0">DLSE\Toni.Cruiser</div>
<div class="a" style="left:706.50px;top:325.60px;width:8.50px;height:1.40px;background:#2b5f92"></div>
<div class="a" style="left:726.3px;top:395.8px;width:165px;height:43.5px;background:#fff;border:1px solid #f1f2f4;box-shadow:0 0.5px 1.5px rgba(0,0,0,0.08)"></div>
<div class="a" style="left:726.60px;top:386px;font-size:5.8px;line-height:8px;color:#777b80;transform:scaleX(0.860);transform-origin:0 0">1/20/2022 11:50:59 AM</div>
<div class="a" style="left:732.70px;top:401px;font-size:9px;line-height:12px;color:#3e6f9c;transform:scaleX(0.845);transform-origin:0 0">Locked</div>
<svg class="a" style="left:733.80px;top:417.60px" width="7.2" height="6" viewBox="0 0 7.2 6"><rect x="0.4" y="0.4" width="6.4" height="4.1" rx="0.4" fill="none" stroke="#4a7fae" stroke-width="0.6"/><path d="M0.4 3.5h6.4M2 5.6h3.2" fill="none" stroke="#4a7fae" stroke-width="0.6"/></svg>
<div class="a" style="left:742.80px;top:417px;font-size:5.5px;line-height:8px;color:#4a7fae;transform:scaleX(0.802);transform-origin:0 0">CLIENT01</div>
<svg class="a" style="left:734.50px;top:427.20px" width="6" height="6" viewBox="0 0 6 6"><circle cx="3" cy="1.6" r="1.3" fill="none" stroke="#4a7fae" stroke-width="0.6"/><path d="M0.4 5.7V5c0-1 .7-1.7 1.7-1.7h1.8c1 0 1.7.7 1.7 1.7v.7z" fill="none" stroke="#4a7fae" stroke-width="0.6"/></svg>
<div class="a" style="left:742.80px;top:427px;font-size:5.5px;line-height:8px;color:#4a7fae;transform:scaleX(0.847);transform-origin:0 0">DLSE\Toni.Cruiser</div>
<svg class="a" style="left:706.30px;top:387.20px" width="9" height="9.4" viewBox="0 0 9 9.4"><path d="M2.3 4.3V3a2.2 2.2 0 0 1 4.4 0v1.3" fill="none" stroke="#d33d3a" stroke-width="1.3"/><rect x="0.2" y="3.9" width="8.6" height="5.4" rx="0.6" fill="#d33d3a"/></svg>
<div class="a" style="left:726.3px;top:461.8px;width:165px;height:43.5px;background:#fff;border:1px solid #f1f2f4;box-shadow:0 0.5px 1.5px rgba(0,0,0,0.08)"></div>
<div class="a" style="left:726.60px;top:452px;font-size:5.8px;line-height:8px;color:#777b80;transform:scaleX(0.860);transform-origin:0 0">1/20/2022 11:49:57 AM</div>
<div class="a" style="left:732.70px;top:467px;font-size:9px;line-height:12px;color:#3e6f9c;transform:scaleX(0.845);transform-origin:0 0">Locked</div>
<svg class="a" style="left:733.80px;top:483.60px" width="7.2" height="6" viewBox="0 0 7.2 6"><rect x="0.4" y="0.4" width="6.4" height="4.1" rx="0.4" fill="none" stroke="#4a7fae" stroke-width="0.6"/><path d="M0.4 3.5h6.4M2 5.6h3.2" fill="none" stroke="#4a7fae" stroke-width="0.6"/></svg>
<div class="a" style="left:742.80px;top:483px;font-size:5.5px;line-height:8px;color:#4a7fae;transform:scaleX(0.802);transform-origin:0 0">CLIENT01</div>
<svg class="a" style="left:734.50px;top:493.20px" width="6" height="6" viewBox="0 0 6 6"><circle cx="3" cy="1.6" r="1.3" fill="none" stroke="#4a7fae" stroke-width="0.6"/><path d="M0.4 5.7V5c0-1 .7-1.7 1.7-1.7h1.8c1 0 1.7.7 1.7 1.7v.7z" fill="none" stroke="#4a7fae" stroke-width="0.6"/></svg>
<div class="a" style="left:742.80px;top:493px;font-size:5.5px;line-height:8px;color:#4a7fae;transform:scaleX(0.847);transform-origin:0 0">DLSE\Toni.Cruiser</div>
<svg class="a" style="left:706.30px;top:453.20px" width="9" height="9.4" viewBox="0 0 9 9.4"><path d="M2.3 4.3V3a2.2 2.2 0 0 1 4.4 0v1.3" fill="none" stroke="#d33d3a" stroke-width="1.3"/><rect x="0.2" y="3.9" width="8.6" height="5.4" rx="0.6" fill="#d33d3a"/></svg>
</body></html>
